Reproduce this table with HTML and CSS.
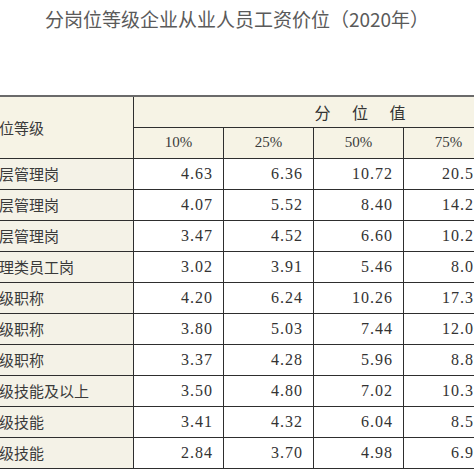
FILE: index.html
```html
<!DOCTYPE html>
<html lang="zh">
<head>
<meta charset="utf-8">
<link rel="stylesheet" href="styles.css">
</head>
<body>
<div class="page">
  <h1 class="title">分岗位等级企业从业人员工资价位（2020年）</h1>
  <div class="sheet">
    <table class="grid">
      <colgroup>
        <col class="c-name"><col class="c-val"><col class="c-val"><col class="c-val"><col class="c-val"><col class="c-val">
      </colgroup>
      <thead>
        <tr>
          <th class="name head-name" rowspan="2">岗位等级</th>
          <th class="group" colspan="5">分 位 值</th>
        </tr>
        <tr>
          <th class="pct">10%</th><th class="pct">25%</th><th class="pct">50%</th><th class="pct">75%</th><th class="pct">90%</th>
        </tr>
      </thead>
      <tbody>
        <tr><td class="name">高层管理岗</td><td>4.63</td><td>6.36</td><td>10.72</td><td>20.53</td><td>40.11</td></tr>
        <tr><td class="name">中层管理岗</td><td>4.07</td><td>5.52</td><td>8.40</td><td>14.26</td><td>25.60</td></tr>
        <tr><td class="name">基层管理岗</td><td>3.47</td><td>4.52</td><td>6.60</td><td>10.21</td><td>16.48</td></tr>
        <tr><td class="name">管理类员工岗</td><td>3.02</td><td>3.91</td><td>5.46</td><td>8.02</td><td>11.80</td></tr>
        <tr><td class="name">高级职称</td><td>4.20</td><td>6.24</td><td>10.26</td><td>17.35</td><td>28.20</td></tr>
        <tr><td class="name">中级职称</td><td>3.80</td><td>5.03</td><td>7.44</td><td>12.00</td><td>19.15</td></tr>
        <tr><td class="name">初级职称</td><td>3.37</td><td>4.28</td><td>5.96</td><td>8.80</td><td>13.20</td></tr>
        <tr><td class="name">高级技能及以上</td><td>3.50</td><td>4.80</td><td>7.02</td><td>10.36</td><td>15.40</td></tr>
        <tr><td class="name">中级技能</td><td>3.41</td><td>4.32</td><td>6.04</td><td>8.52</td><td>12.10</td></tr>
        <tr><td class="name">初级技能</td><td>2.84</td><td>3.70</td><td>4.98</td><td>6.90</td><td>9.75</td></tr>
      </tbody>
    </table>
  </div>
</div>
</body>
</html>
```
FILE: styles.css
```css
html, body {
  margin: 0;
  padding: 0;
  background: #ffffff;
}
.page {
  width: 474px;
  height: 474px;
  overflow: hidden;
}
.title {
  margin: 0 0 58px 0;
  height: 37px;
  line-height: 37px;
  text-align: center;
  font-family: "Noto Sans CJK SC", "Noto Sans", sans-serif;
  font-size: 19px;
  font-weight: 400;
  color: #5a5a5a;
  letter-spacing: 0;
}
.sheet {
  margin-left: -17px;
}
.grid {
  border-collapse: collapse;
  table-layout: fixed;
  width: 600px;
  font-family: "Liberation Serif", "Noto Sans CJK SC", serif;
  color: #333;
  border-top: 2px solid #6a6a6a;
}
.c-name { width: 150px; }
.c-val { width: 90px; }
.grid tr { height: 31px; }
.grid th, .grid td {
  border: 1px solid #2e2e2e;
  padding: 0;
  font-weight: 400;
}
.grid thead th {
  background: #f6f3e5;
}
.grid thead tr:first-child th {
  border-top: 2px solid #6a6a6a;
}
.name {
  background: #f4f2e7;
  text-align: left;
  font-family: "Noto Sans CJK SC", sans-serif;
  font-size: 15px;
  color: #3a3a3a;
  padding-left: 0;
  white-space: nowrap;
  overflow: hidden;
}
.head-name {
  padding-top: 2px;
}
.group {
  font-family: "Noto Sans CJK SC", sans-serif;
  font-size: 16px;
  letter-spacing: 9px;
  text-align: center;
  padding-left: 12px !important;
  border-bottom: 1px solid #2e2e2e;
}
.pct {
  font-size: 15px;
  text-align: center;
  color: #3a3a3a;
}
.grid tbody td:not(.name) {
  text-align: right;
  font-size: 16px;
  letter-spacing: 1px;
  padding-right: 10px;
  background: #ffffff;
}
```
